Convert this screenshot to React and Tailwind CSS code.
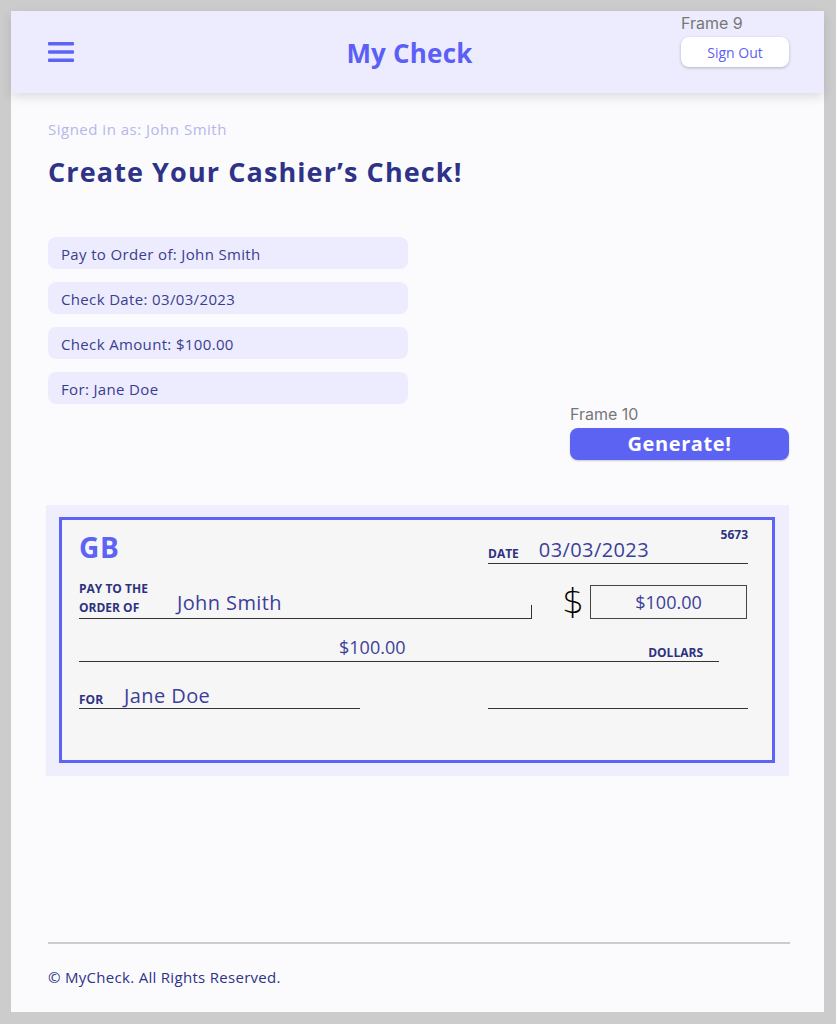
import { useState } from 'react';

const FONT = { fontFamily: '"Open Sans", "Noto Sans", sans-serif' };
const LABEL_FONT = { fontFamily: 'Inter, "Noto Sans", sans-serif' };

function MenuIcon() {
  return (
    <svg width="26" height="20" viewBox="0 0 26 20" className="block">
      <rect x="0" y="0" width="26" height="3.5" rx="1" fill="#5c63f5" />
      <rect x="0" y="8.25" width="26" height="3.5" rx="1" fill="#5c63f5" />
      <rect x="0" y="16.5" width="26" height="3.5" rx="1" fill="#5c63f5" />
    </svg>
  );
}

function Field({ children }) {
  return (
    <div className="w-[360px] h-8 rounded-lg bg-[#ececfe] pl-[13px] pt-[3px] flex items-center text-[15px] tracking-[0.35px] text-[#3a3d8f]">
      {children}
    </div>
  );
}

function Check({ payee, date, amount, memo }) {
  return (
    <div className="w-[743px] bg-[#eeeefd] pt-3 pl-[13px] pr-[14px] pb-[13px]">
      <div className="h-[246px] border-[3px] border-[#5c63f5] bg-[#f6f6f6] pl-[17px] pr-[24px] pt-[8px]">
        {/* row 1 */}
        <div className="flex justify-between items-end">
          <div className="text-[28px] font-bold text-[#5c63f5] leading-none mb-[3px] tracking-[0.8px]">GB</div>
          <div className="w-[260px]">
            <div className="text-right text-[12px] font-bold text-[#2e3180] leading-[14px]">5673</div>
            <div className="flex items-end border-b-[1.5px] border-[#333] h-[22px]">
              <span className="text-[12px] font-bold text-[#2e3180] leading-none mb-[3px]">DATE</span>
              <span className="ml-[20px] text-[20px] tracking-[0.4px] text-[#3c3f9a] leading-none mb-[3px]">{date}</span>
            </div>
          </div>
        </div>

        {/* row 2 */}
        <div className="flex items-end mt-[20px]">
          <div className="w-[453px] h-[34px] flex items-end border-b-[1.5px] border-[#333]">
            <div className="text-[12px] font-bold text-[#2e3180] leading-[19px] mb-[1px]">
              PAY TO THE<br />ORDER OF
            </div>
            <span className="ml-[29px] text-[20px] tracking-[0.4px] text-[#3c3f9a] leading-none mb-[5px]">{payee}</span>
            <span className="flex-1" />
            <span className="h-[13px] border-r-[1.5px] border-[#333]" />
          </div>
          <span className="ml-[30px] w-[19px] text-[34px] leading-none text-black mb-[1px]" style={{ fontFamily: '"DejaVu Sans", sans-serif', fontWeight: 200 }}>$</span>
          <div className="ml-[9px] w-[157px] h-[34px] border-[1.5px] border-[#444] flex items-center justify-center text-[18px] text-[#3c3f9a]">
            {amount}
          </div>
        </div>

        {/* row 3 */}
        <div className="w-[640px] h-[34px] mt-[9px] flex items-end border-b-[1.5px] border-[#333]">
          <span className="ml-[260px] text-[18px] text-[#3c3f9a] leading-none mb-[5px]">{amount}</span>
          <span className="ml-auto mr-[16px] text-[12px] font-bold text-[#2e3180] leading-none mb-[2px]">DOLLARS</span>
        </div>

        {/* row 4 */}
        <div className="flex items-end mt-[13px]">
          <div className="w-[281px] h-[34px] flex items-end border-b-[1.5px] border-[#333]">
            <span className="text-[12px] font-bold text-[#2e3180] leading-none mb-[2px]">FOR</span>
            <span className="ml-[21px] text-[20px] tracking-[0.4px] text-[#3c3f9a] leading-none mb-[2px]">{memo}</span>
          </div>
          <div className="ml-[128px] w-[260px] border-b-[1.5px] border-[#333]" />
        </div>
      </div>
    </div>
  );
}

export default function App() {
  const [form] = useState({
    payee: 'John Smith',
    date: '03/03/2023',
    amount: '$100.00',
    memo: 'Jane Doe',
  });

  return (
    <div className="w-[836px] h-[1024px] bg-[#cccccc] pt-[11px] pl-[11px]" style={FONT}>
      <div className="w-[813px] h-[1001px] bg-[#fbfbfe] flex flex-col">
        {/* header */}
        <header className="h-[82px] bg-[#ececfe] shadow-[0_4px_10px_rgba(0,0,0,0.12)] pl-[37px] pr-[35px] grid grid-cols-[1fr_auto_1fr] items-center relative z-10">
          <MenuIcon />
          <h1 className="text-[26px] font-bold tracking-[0.2px] text-[#5c5ff5] mr-[18px] mt-[3px]">My Check</h1>
          <div className="relative justify-self-end">
            <div className="absolute -top-[24px] left-0 text-[16px] leading-5 text-[#777]" style={LABEL_FONT}>Frame 9</div>
            <button className="w-[108px] h-[30px] rounded-lg bg-white shadow-[0_1px_3px_rgba(0,0,0,0.25)] text-[14px] text-[#5c5ff5]">
              Sign Out
            </button>
          </div>
        </header>

        {/* body */}
        <main className="pl-[37px] pt-[26px]">
          <p className="text-[15px] leading-5 tracking-[0.5px] text-[#b5b7ea]">Signed in as: John Smith</p>
          <h2 className="mt-[15px] text-[27px] leading-9 font-bold tracking-[1.1px] text-[#2e3387]">Create Your Cashier&rsquo;s Check!</h2>

          <div className="mt-[47px] flex flex-col gap-[13px]">
            <Field>Pay to Order of: {form.payee}</Field>
            <Field>Check Date: {form.date}</Field>
            <Field>Check Amount: {form.amount}</Field>
            <Field>For: {form.memo}</Field>
          </div>

          <div className="flex justify-end pr-[35px]">
            <div>
              <div className="text-[16px] leading-5 text-[#777]" style={LABEL_FONT}>Frame 10</div>
              <button className="mt-[4px] w-[219px] h-8 rounded-lg bg-[#5c63f3] shadow-[0_1px_2px_rgba(0,0,0,0.2)] text-white text-[20px] tracking-[0.6px] font-bold">
                Generate!
              </button>
            </div>
          </div>

          <div className="mt-[45px] -ml-[2px]">
            <Check {...form} />
          </div>
        </main>

        {/* footer */}
        <footer className="mt-auto ml-[37px] mr-[34px] border-t-2 border-[#cccccc] pt-[23px] pb-[25px]">
          <p className="text-[15px] leading-5 tracking-[0.3px] text-[#2e3387]">&copy; MyCheck. All Rights Reserved.</p>
        </footer>
      </div>
    </div>
  );
}
